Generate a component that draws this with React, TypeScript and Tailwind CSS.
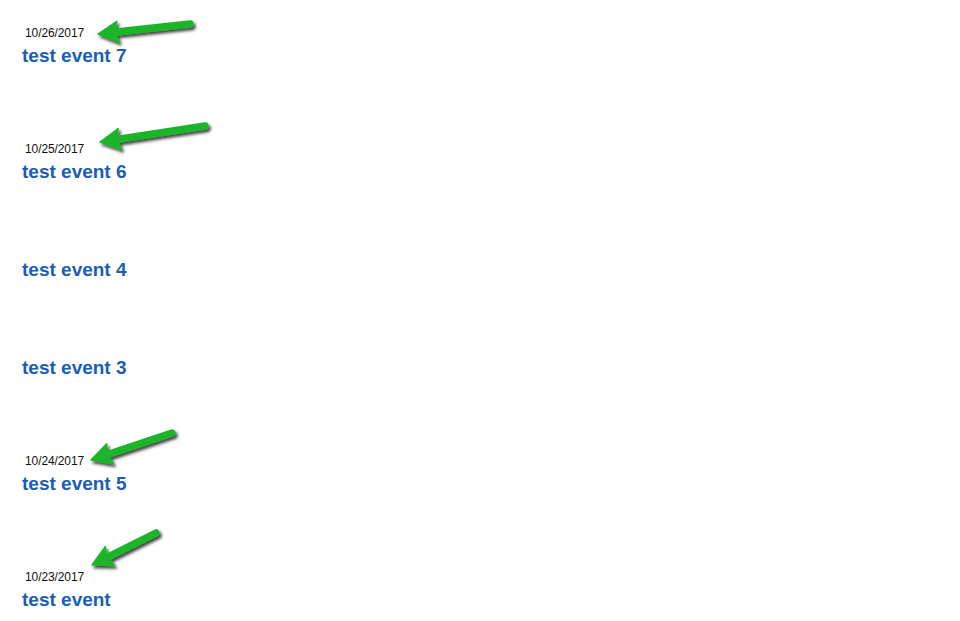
const events = [
  { date: "10/26/2017", title: "test event 7" },
  { date: "10/25/2017", title: "test event 6" },
  { date: "", title: "test event 4" },
  { date: "", title: "test event 3" },
  { date: "10/24/2017", title: "test event 5" },
  { date: "10/23/2017", title: "test event" },
];

// annotation arrows: tail -> tip
const arrows = [
  { tail: [190, 24], tip: [98, 34] },
  { tail: [205, 126], tip: [100, 142] },
  { tail: [172, 433], tip: [91, 460] },
  { tail: [156, 533], tip: [92, 565] },
];

function Arrow({ tail, tip }: { tail: number[]; tip: number[] }) {
  const dx = tip[0] - tail[0];
  const dy = tip[1] - tail[1];
  const len = Math.hypot(dx, dy);
  const ux = dx / len;
  const uy = dy / len;
  const nx = -uy;
  const ny = ux;
  const L = 20;
  const W = 10.5;
  const bx = tip[0] - ux * L;
  const by = tip[1] - uy * L;
  const pts = [
    [tip[0], tip[1]],
    [bx + nx * W, by + ny * W],
    [bx + ux * 3, by + uy * 3],
    [bx - nx * W, by - ny * W],
  ]
    .map((p) => p.join(","))
    .join(" ");
  return (
    <g filter="url(#arrowShadow)">
      <line
        x1={tail[0]}
        y1={tail[1]}
        x2={bx + ux * 4}
        y2={by + uy * 4}
        stroke="#1fb52b"
        strokeWidth={7.5}
        strokeLinecap="round"
      />
      <polygon points={pts} fill="#1fb52b" strokeLinejoin="round" stroke="#1fb52b" strokeWidth={1.5} />
    </g>
  );
}

export default function App() {
  return (
    <div className="relative h-[621px] w-full overflow-hidden bg-white font-['Liberation_Sans',Arial,sans-serif]">
      <ul className="flex flex-col gap-[75px] pl-[22px] pt-[26px]">
        {events.map((ev) => (
          <li key={ev.title}>
            {ev.date && (
              <div className="mb-[5px] ml-[3px] pt-[1px] text-[12px] leading-[12px] tracking-[-0.1px] text-[#111]">
                {ev.date}
              </div>
            )}
            <a
              href="#"
              className="block text-[19px] font-bold leading-[23px] text-[#1b5db5]"
            >
              {ev.title}
            </a>
          </li>
        ))}
      </ul>

      <svg
        className="pointer-events-none absolute left-0 top-0"
        width="960"
        height="621"
        viewBox="0 0 960 621"
      >
        <defs>
          <filter id="arrowShadow" x="-20%" y="-50%" width="140%" height="200%">
            <feDropShadow dx="2" dy="2.5" stdDeviation="1.6" floodColor="#000" floodOpacity="0.75" />
          </filter>
        </defs>
        {arrows.map((a, i) => (
          <Arrow key={i} tail={a.tail} tip={a.tip} />
        ))}
      </svg>
    </div>
  );
}
